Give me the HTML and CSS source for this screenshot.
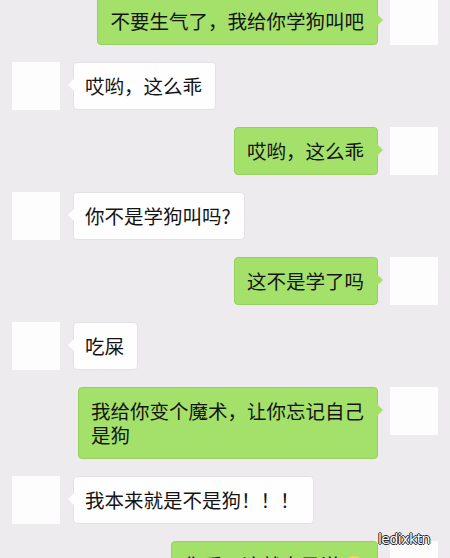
FILE: index.html
```html
<!DOCTYPE html>
<html>
<head>
  <meta charset="UTF-8" />
  <title>聊天</title>
  <link rel="stylesheet" href="styles.css">
</head>
<body>
  <div class="chat">

    <div class="row me">
      <div class="bubble">不要生气了，我给你学狗叫吧</div>
      <div class="avatar"></div>
    </div>

    <div class="row">
      <div class="avatar"></div>
      <div class="bubble">哎哟，这么乖</div>
    </div>

    <div class="row me">
      <div class="bubble">哎哟，这么乖</div>
      <div class="avatar"></div>
    </div>

    <div class="row">
      <div class="avatar"></div>
      <div class="bubble">你不是学狗叫吗?</div>
    </div>

    <div class="row me">
      <div class="bubble">这不是学了吗</div>
      <div class="avatar"></div>
    </div>

    <div class="row">
      <div class="avatar"></div>
      <div class="bubble">吃屎</div>
    </div>

    <div class="row me">
      <div class="bubble">我给你变个魔术，让你忘记自己是狗</div>
      <div class="avatar"></div>
    </div>

    <div class="row">
      <div class="avatar"></div>
      <div class="bubble">我本来就是不是狗！！！</div>
    </div>

    <div class="row me">
      <div class="bubble">你看，这就自己说 <span class="emoji"></span></div>
      <div class="avatar"></div>
    </div>

  </div>

  <div class="mark">ledixktn</div>
</body>
</html>
```

FILE: styles.css
```css
body {
  margin: 0;
  background-color: #eeebef;
  font-family: 'Noto Sans CJK SC', 'Noto Sans', sans-serif;
  color: #141414;
  overflow: hidden;
  height: 558px;
  position: relative;
}
.chat {
  padding: 0 12px;
  margin-top: -3px;
}
.row {
  display: flex;
  align-items: flex-start;
  gap: 13px;
  margin-bottom: 17px;
}
.row.me {
  justify-content: flex-end;
  gap: 12px;
}
.avatar {
  width: 48px;
  height: 48px;
  flex: none;
  background-color: #fdfdfd;
}
.bubble {
  position: relative;
  max-width: 300px;
  box-sizing: border-box;
  padding: 11px 13px 11px 11px;
  font-size: 19.5px;
  line-height: 24px;
  background-color: #fefefe;
  border: 1px solid #e4e1e6;
  border-radius: 4px;
}
/* little tail pointing at the avatar */
.bubble::before {
  content: '';
  position: absolute;
  top: 16px;
  left: -6px;
  border-top: 6px solid transparent;
  border-bottom: 6px solid transparent;
  border-right: 6px solid #fefefe;
}
.me .bubble {
  padding: 11px 13px 11px 12px;
  background-color: #a4e16b;
  border-color: #97cf61;
}
.me .bubble::before {
  left: auto;
  right: -6px;
  border-right: none;
  border-left: 6px solid #a4e16b;
}
.emoji {
  display: inline-block;
  width: 20px;
  height: 20px;
  border-radius: 50%;
  background-color: #f4d65a;
  vertical-align: -3px;
}
.mark {
  position: absolute;
  right: 20px;
  top: 531px;
  font-family: 'DejaVu Sans', sans-serif;
  font-size: 14px;
  color: #fff;
  letter-spacing: -0.5px;
  text-shadow: -1px 0 #222, 1px 0 #222, 0 -1px #222, 0 1px #222;
}
```
